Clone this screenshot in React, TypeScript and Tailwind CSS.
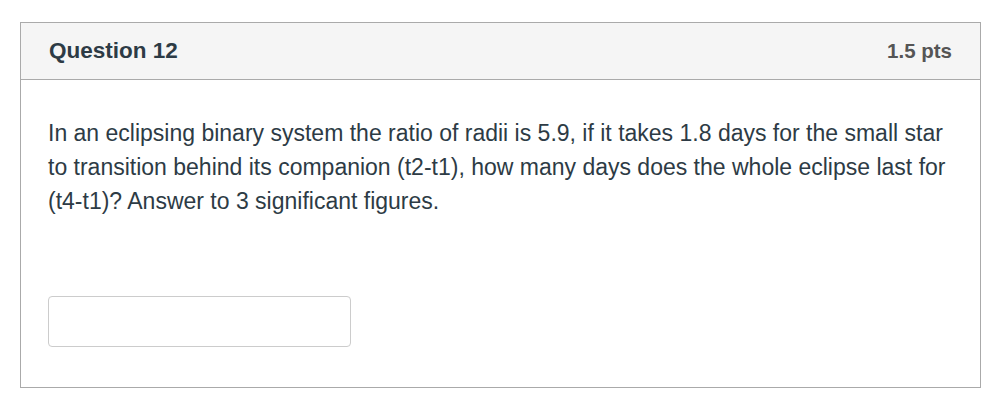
export default function App() {
  return (
    <div className="min-h-[416px] bg-white pt-[22px] pl-[20px] pr-[22px] font-['Liberation_Sans',Arial,sans-serif]">
      <div className="w-[961px] border border-[#aaaaaa] bg-white">
        <div className="flex h-[57px] items-center justify-between border-b border-[#aaaaaa] bg-[#f5f5f5] pl-[28px] pr-[28px]">
          <h2 className="text-[22.5px] font-bold text-[#2d3b45]">Question 12</h2>
          <span className="text-[20.5px] font-bold text-[#555555]">1.5 pts</span>
        </div>
        <div className="px-[27px] pt-[36px] pb-[40px]">
          <p className="text-[23px] leading-[34px] text-[#2d3b45]">
            In an eclipsing binary system the ratio of radii is 5.9, if it takes 1.8 days for the small star to transition behind its companion (t2-t1), how many days does the whole eclipse last for (t4-t1)? Answer to 3 significant figures.
          </p>
          <input
            type="text"
            className="mt-[78px] block h-[51px] w-[303px] rounded-[4px] border border-[#cccccc] bg-white px-3 text-[20px] outline-none"
          />
        </div>
      </div>
    </div>
  )
}
